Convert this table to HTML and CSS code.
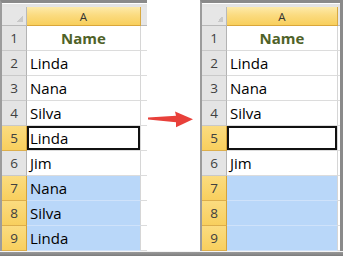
FILE: index.html
```html
<!DOCTYPE html>
<html>
<head>
<meta charset="utf-8">
<link rel="stylesheet" href="styles.css">
</head>
<body>
<div class="page">
  <div class="panes">
    <div class="sheet sheet-left">
      <div class="band"></div>
      <div class="grid">
        <div class="corner"></div><div class="colhdr">A</div><div class="xhdr"></div>
        <div class="rowhdr">1</div><div class="cell title">Name</div><div class="xcell"></div>
        <div class="rowhdr">2</div><div class="cell">Linda</div><div class="xcell"></div>
        <div class="rowhdr">3</div><div class="cell">Nana</div><div class="xcell"></div>
        <div class="rowhdr">4</div><div class="cell">Silva</div><div class="xcell"></div>
        <div class="rowhdr sel">5</div><div class="cell active">Linda</div><div class="xcell"></div>
        <div class="rowhdr">6</div><div class="cell">Jim</div><div class="xcell"></div>
        <div class="rowhdr sel">7</div><div class="cell hl">Nana</div><div class="xcell"></div>
        <div class="rowhdr sel">8</div><div class="cell hl">Silva</div><div class="xcell"></div>
        <div class="rowhdr sel">9</div><div class="cell hl">Linda</div><div class="xcell"></div>
      </div>
    </div>

    <svg class="arrow" width="53" height="251" viewBox="0 0 53 251">
      <polygon points="1,117.6 29,115.8 28,111.5 46,119.2 29,127.2 29,122.2 1,119.4" fill="#e8403a"/>
    </svg>

    <div class="sheet sheet-right">
      <div class="band"></div>
      <div class="grid">
        <div class="corner"></div><div class="colhdr">A</div><div class="xhdr"></div>
        <div class="rowhdr">1</div><div class="cell title">Name</div><div class="xcell"></div>
        <div class="rowhdr">2</div><div class="cell">Linda</div><div class="xcell"></div>
        <div class="rowhdr">3</div><div class="cell">Nana</div><div class="xcell"></div>
        <div class="rowhdr">4</div><div class="cell">Silva</div><div class="xcell"></div>
        <div class="rowhdr sel">5</div><div class="cell active"></div><div class="xcell"></div>
        <div class="rowhdr">6</div><div class="cell">Jim</div><div class="xcell"></div>
        <div class="rowhdr sel">7</div><div class="cell hl"></div><div class="xcell"></div>
        <div class="rowhdr sel">8</div><div class="cell hl"></div><div class="xcell"></div>
        <div class="rowhdr sel">9</div><div class="cell hl"></div><div class="xcell"></div>
      </div>
    </div>
  </div>
  <div class="bottom-bar"></div>
</div>
</body>
</html>
```

FILE: styles.css
```css
* { box-sizing: border-box; }

html, body {
  margin: 0;
  padding: 0;
  background: #ffffff;
}

.page {
  width: 343px;
  height: 256px;
  display: flex;
  flex-direction: column;
  overflow: hidden;
  font-family: "Open Sans", "Liberation Sans", sans-serif;
}

.panes {
  display: flex;
  height: 251px;
}

.sheet {
  display: flex;
  flex-direction: column;
  border-top: 3px solid #8a8a8a;
  border-left: 2px solid #9c9c9c;
}

.sheet-left { width: 147px; }
.sheet-right {
  width: 143px;
  border-right: 3px solid #8a8a8a;
}

.band {
  height: 4px;
  background: linear-gradient(#ffffff 1px, #e4e4e4 1px);
}

.grid {
  display: grid;
  grid-template-rows: 19px repeat(9, 25px);
}

.sheet-left .grid { grid-template-columns: 25px 114px 6px; }
.sheet-right .grid { grid-template-columns: 25px 111px 2px; }

.corner {
  background:
    linear-gradient(135deg, transparent 70%, #c9c9c9 70%) no-repeat right 3px bottom 3px / 10px 10px,
    #e6e6e6;
  border-right: 1px solid #b9b9b9;
  border-bottom: 1px solid #b9b9b9;
}

.colhdr {
  background: linear-gradient(#fdeaa9, #fbdb80 45%, #f8cf5c);
  border-right: 1px solid #d8a940;
  border-bottom: 1px solid #d9a63a;
  font-size: 11.5px;
  color: #333333;
  text-align: center;
  line-height: 19px;
}

.xhdr {
  background: #e6e6e6;
  border-bottom: 1px solid #b9b9b9;
}

.rowhdr {
  background: #e4e4e4;
  border-right: 1px solid #b3b3b3;
  border-bottom: 1px solid #c9c9c9;
  font-size: 13.5px;
  color: #404040;
  text-align: center;
  line-height: 25px;
}

.rowhdr.sel {
  background: linear-gradient(#fbdc80, #f8cf5e);
  border-right-color: #d5a33a;
  border-bottom-color: #dcae4c;
}

.cell {
  border-right: 1px solid #d6d6d6;
  border-bottom: 1px solid #dcdcdc;
  font-size: 15px;
  color: #000000;
  line-height: 24px;
  padding-left: 3px;
  white-space: nowrap;
  overflow: hidden;
}

.cell.title {
  font-weight: bold;
  color: #4f6228;
  text-align: center;
  padding-left: 0;
}

.cell.active {
  box-shadow: inset 0 0 0 2px #111111;
}

.cell.hl {
  background: #b9d7f9;
  border-bottom-color: #cfe2fa;
}

.xcell {
  border-bottom: 1px solid #dcdcdc;
}

.arrow {
  display: block;
  flex: none;
}

.bottom-bar {
  height: 5px;
  border-top: 1px solid #f4f4f4;
  background: linear-gradient(#9a9a9a, #7c7c7c);
}
```
